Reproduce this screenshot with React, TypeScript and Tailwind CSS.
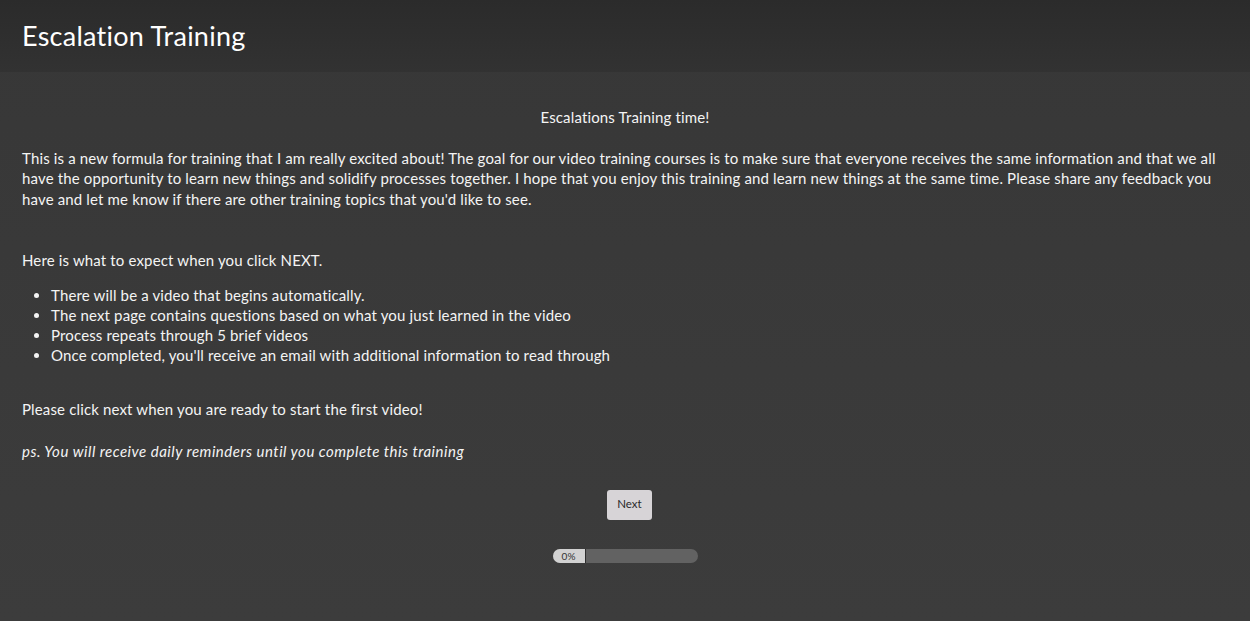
export default function App() {
  return (
    <div className="min-h-[621px] bg-gradient-to-b from-[#373737] to-[#3c3c3c] text-[#f4f4f4] font-['Lato','Open_Sans',sans-serif]">
      <header className="flex h-[72px] items-center bg-gradient-to-b from-[#2b2b2b] to-[#323232] px-[22px]">
        <h1 className="-mt-[1px] text-[27px] font-normal leading-none tracking-[0.25px] text-white">Escalation Training</h1>
      </header>
      <main className="px-[22px] pt-[35px] text-[15px] leading-[20.5px] tracking-[0.15px]">
        <p className="text-center">Escalations Training time!</p>
        <p className="mt-[20px]">
          This is a new formula for training that I am really excited about! The goal for our video training courses is to make sure that everyone receives the same information and that we all have the opportunity to learn new things and solidify processes together. I hope that you enjoy this training and learn new things at the same time. Please share any feedback you have and let me know if there are other training topics that you'd like to see.
        </p>
        <p className="mt-[41px]">Here is what to expect when you click NEXT.</p>
        <ul className="mt-[14px] list-disc pl-[29px] leading-[20px]">
          <li>There will be a video that begins automatically.</li>
          <li>The next page contains questions based on what you just learned in the video</li>
          <li>Process repeats through 5 brief videos</li>
          <li>Once completed, you'll receive an email with additional information to read through</li>
        </ul>
        <p className="mt-[34px]">Please click next when you are ready to start the first video!</p>
        <p className="mt-[22px] italic tracking-[0.5px]">ps. You will receive daily reminders until you complete this training</p>
        <div className="mt-[28px] flex justify-center pl-[9px]">
          <button className="h-[30px] w-[45px] rounded-[3px] bg-[#d7d4d7] text-[11.5px] tracking-normal text-[#2a2a2a]">Next</button>
        </div>
        <div className="mt-[29px] flex justify-center pb-[20px]">
          <div className="flex h-[14px] w-[145px] overflow-hidden rounded-full bg-[#626262]">
            <div className="flex w-[33px] items-center justify-center border-r border-[#2e2e2e] bg-[#d2d2d2] text-[10px] leading-none tracking-normal text-[#333]">0%</div>
          </div>
        </div>
      </main>
    </div>
  )
}
